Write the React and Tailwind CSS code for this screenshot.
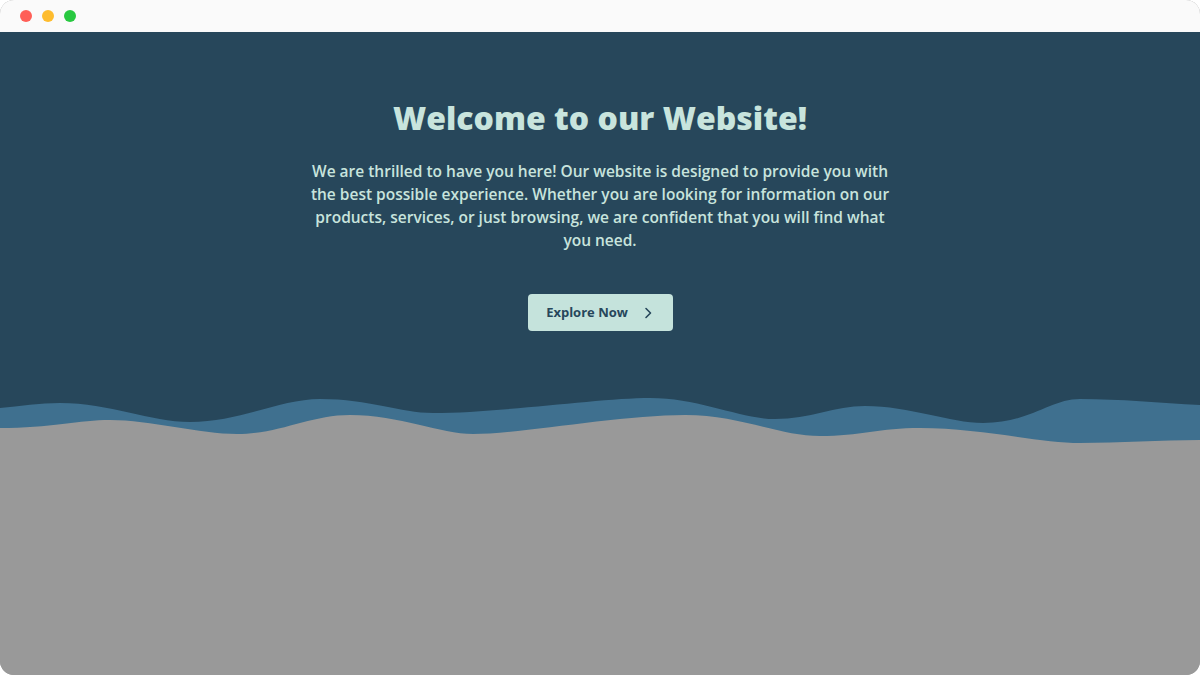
import React from "react";

export default function App() {
  return (
    <div className="w-[1200px] h-[675px] bg-white" style={{ fontFamily: "'Open Sans', sans-serif" }}>
      <div className="w-full h-full rounded-[14px] overflow-hidden flex flex-col bg-[#999999]">
        <div className="h-8 bg-[#fafafa] flex items-center gap-[10px] pl-5 shrink-0">
          <span className="w-3 h-3 rounded-full bg-[#ff5f57]" />
          <span className="w-3 h-3 rounded-full bg-[#febc2e]" />
          <span className="w-3 h-3 rounded-full bg-[#28c840]" />
        </div>
        <section className="bg-[#27475b] h-[358px] shrink-0 flex flex-col items-center pt-[66px] text-[#c8e4dd]">
          <h1 className="text-[32px] font-extrabold leading-[40px]">Welcome to our Website!</h1>
          <p className="mt-[22px] w-[592px] text-center text-[15.5px] leading-[23px] font-semibold">
            We are thrilled to have you here! Our website is designed to provide you with the best possible experience. Whether you are looking for information on our products, services, or just browsing, we are confident that you will find what you need.
          </p>
          <button className="mt-[42px] h-[37px] w-[145px] rounded-[4px] bg-[#c5e3dc] text-[#27475b] text-[13px] font-bold flex items-center justify-center gap-[14px]">
            Explore Now
            <svg width="12" height="12" viewBox="0 0 12 12" fill="none" stroke="#27475b" strokeWidth="1.6" strokeLinecap="round" strokeLinejoin="round">
              <path d="M4 1.5 L8.5 6 L4 10.5" />
            </svg>
          </button>
        </section>
        <svg className="block shrink-0" width="1200" height="60" viewBox="0 0 1200 60" preserveAspectRatio="none">
          <rect x="0" y="0" width="1200" height="60" fill="#27475b" />
          <path
            fill="#3f708f"
            d="M0 18 C 20 16, 40 13, 60 13 C 110 13, 150 32, 190 32 C 240 32, 280 9, 320 9 C 370 9, 400 23, 433 23 C 500 23, 600 8, 650 8 C 700 8, 740 29, 775 29 C 810 29, 835 16, 865 16 C 910 16, 950 33, 983 33 C 1030 33, 1050 9, 1080 9 C 1120 9, 1160 13, 1200 15 L1200 60 L0 60 Z"
          />
          <path
            fill="#999999"
            d="M0 38 C 50 38, 80 30, 110 30 C 150 30, 200 44, 237 44 C 280 44, 310 25, 350 25 C 400 25, 440 44, 473 44 C 520 44, 620 25, 685 25 C 740 25, 780 46, 820 46 C 860 46, 880 38, 920 38 C 980 38, 1040 53, 1080 53 C 1120 53, 1160 50, 1200 50 L1200 60 L0 60 Z"
          />
        </svg>
        <div className="flex-1 bg-[#999999]" />
      </div>
    </div>
  );
}
